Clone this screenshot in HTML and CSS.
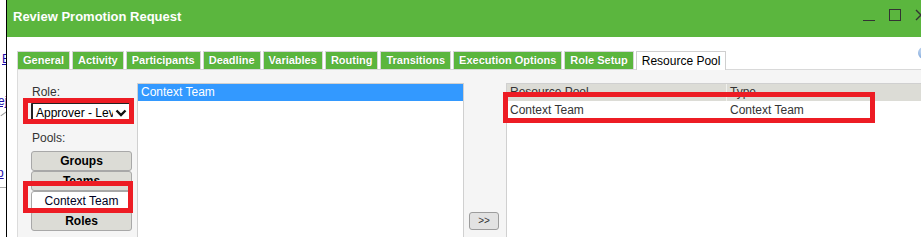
FILE: index.html
```html
<!DOCTYPE html>
<html>
<head>
<meta charset="utf-8">
<link rel="stylesheet" href="styles.css">
</head>
<body>
<div class="screen">
  <div class="behind">
    <a class="frag f1" href="#">E</a>
    <a class="frag f2" href="#">ej</a>
    <div class="slash"></div>
    <a class="frag f3" href="#">p</a>
    <div class="hr"></div>
  </div>
  <div class="dialog">
    <div class="titlebar">
      <span class="title">Review Promotion Request</span>
      <div class="controls">
        <span class="ctl-min"></span>
        <span class="ctl-max"></span>
        <svg class="ctl-close" width="12" height="12" viewBox="0 0 12 12"><path d="M1 1 L11 11 M11 1 L1 11" stroke="#333" stroke-width="1.4" fill="none"/></svg>
      </div>
    </div>
    <div class="dbody">
      <div class="tabrow">
        <div class="tabs">
          <span class="tab">General</span>
          <span class="tab">Activity</span>
          <span class="tab">Participants</span>
          <span class="tab">Deadline</span>
          <span class="tab">Variables</span>
          <span class="tab">Routing</span>
          <span class="tab">Transitions</span>
          <span class="tab">Execution Options</span>
          <span class="tab">Role Setup</span>
          <span class="tab active">Resource Pool</span>
        </div>
        <span class="help"></span>
      </div>
      <div class="panel">
        <div class="leftcol">
          <div class="lbl">Role:</div>
          <div class="select"><span class="seltext">Approver - Level 1</span>
            <svg class="chev" width="12" height="8" viewBox="0 0 12 8"><path d="M1.5 1.5 L6 6 L10.5 1.5" stroke="#111" stroke-width="2.4" fill="none"/></svg>
          </div>
          <div class="lbl pools">Pools:</div>
          <div class="btns">
            <div class="pbtn">Groups</div>
            <div class="pbtn">Teams</div>
            <div class="pbtn on">Context Team</div>
            <div class="pbtn">Roles</div>
          </div>
        </div>
        <div class="listbox">
          <div class="li sel">Context Team</div>
        </div>
        <div class="midcol">
          <div class="movebtn">&gt;&gt;</div>
        </div>
        <div class="grid">
          <div class="ghead">
            <div class="c1">Resource Pool</div>
            <div class="c2">Type</div>
          </div>
          <div class="grow">
            <div class="c1">Context Team</div>
            <div class="c2">Context Team</div>
          </div>
        </div>
      </div>
    </div>
  </div>
  <div class="mark m-role"></div>
  <div class="mark m-pool"></div>
  <div class="mark m-row"></div>
</div>
</body>
</html>
```
FILE: styles.css
```css
html, body {
  margin: 0;
  padding: 0;
  background: #fff;
}
.screen {
  position: relative;
  width: 921px;
  height: 237px;
  overflow: hidden;
  display: flex;
  font-family: "Liberation Sans", Arial, sans-serif;
}
.behind {
  width: 6px;
  flex: none;
  overflow: hidden;
  background: #fff;
  font-size: 12px;
}
.frag {
  display: block;
  color: #1a0dab;
  text-decoration: underline;
  line-height: 12px;
  white-space: nowrap;
}
.f1 { margin-top: 53px; text-indent: 2px; }
.f2 { margin-top: 30px; text-indent: -2px; }
.slash {
  width: 8px;
  height: 1px;
  background: #999;
  transform: rotate(-35deg);
  margin-top: 6px;
}
.f3 { margin-top: 53px; text-indent: -3px; }
.hr {
  height: 1px;
  background: #aaa;
  margin-top: 8px;
}
.dialog {
  flex: 1;
  border-left: 1px solid #000;
  display: flex;
  flex-direction: column;
  min-width: 0;
}
.titlebar {
  height: 37px;
  flex: none;
  background: #5bb63e;
  display: flex;
  align-items: center;
  overflow: hidden;
}
.title {
  color: #fff;
  font-weight: bold;
  font-size: 13px;
  padding-left: 6px;
  margin-top: -4px;
}
.controls {
  margin-left: auto;
  margin-right: -6px;
  display: flex;
  align-items: center;
  gap: 14px;
  margin-top: -7px;
}
.ctl-min {
  width: 12px;
  height: 1px;
  background: #333;
  margin-top: 10px;
}
.ctl-max {
  width: 10px;
  height: 10px;
  border: 1.5px solid #333;
}
.ctl-close { display: block; }
.dbody {
  flex: 1;
  background: #fff;
  padding: 14px 0 0 10px;
  display: flex;
  flex-direction: column;
}
.tabrow {
  display: flex;
  align-items: flex-end;
  position: relative;
  z-index: 1;
}
.tabs {
  display: flex;
  align-items: flex-end;
}
.tab {
  background: #5bb63e;
  color: #fff;
  font-weight: bold;
  font-size: 11px;
  line-height: 17px;
  height: 17px;
  padding: 0 5px;
  border: 1px solid #d6d6d6;
  border-bottom: none;
  margin-right: 2px;
  white-space: nowrap;
  text-shadow: 0 0 1px rgba(0,0,0,0.25);
}
.tab.active {
  background: #fff;
  color: #000;
  font-weight: normal;
  font-size: 12px;
  padding: 0 5px;
  height: 18px;
  line-height: 18px;
  border-color: #cfcfcf;
  margin-bottom: -1px;
  text-shadow: none;
}
.help {
  margin-left: auto;
  margin-right: -9px;
  align-self: flex-start;
  margin-top: -4px;
  width: 12px;
  height: 12px;
  border-radius: 50%;
  background: radial-gradient(circle at 40% 35%, #cfe0f5, #5d8fd0);
}
.panel {
  flex: 1;
  background: #f5f5f5;
  border-top: 1px solid #d9d9d9;
  border-left: 1px solid #dcdcdc;
  display: flex;
  align-items: flex-start;
  min-height: 0;
}
.leftcol {
  width: 105px;
  flex: none;
  padding: 15px 0 0 14px;
  color: #333;
  font-size: 12px;
}
.lbl {
  line-height: 14px;
}
.select {
  margin: 3px 0 0 -1px;
  width: 96px;
  height: 17px;
  border: 1px solid #222;
  border-top-width: 2px;
  border-left-width: 2px;
  border-radius: 2px;
  background: #fff;
  display: flex;
  align-items: center;
  overflow: hidden;
}
.seltext {
  flex: 1;
  overflow: hidden;
  white-space: nowrap;
  color: #000;
  font-size: 12px;
  padding-left: 3px;
}
.chev {
  flex: none;
  margin: 0 2px 0 2px;
}
.pools {
  margin-top: 9px;
}
.btns {
  margin: 6px 0 0 -1px;
  display: flex;
  flex-direction: column;
}
.pbtn {
  width: 99px;
  height: 18px;
  line-height: 18px;
  border: 1px solid #a8a8a8;
  border-radius: 3px;
  background: #dcdcd6;
  color: #000;
  text-align: center;
  font-size: 12px;
  font-weight: bold;
}
.pbtn.on {
  background: #fff;
  font-weight: normal;
  color: #000022;
}
.listbox {
  margin-top: 13px;
  width: 325px;
  height: 200px;
  flex: none;
  border: 1px solid #d0d0d0;
  background: #fff;
}
.li {
  height: 17px;
  line-height: 17px;
  font-size: 12px;
  padding-left: 3px;
}
.li.sel {
  background: #3399ff;
  color: #fff;
}
.midcol {
  width: 37px;
  flex: none;
  padding: 142px 0 0 5px;
}
.movebtn {
  width: 28px;
  height: 16px;
  line-height: 16px;
  border: 1px solid #9c9c9c;
  border-radius: 3px;
  background: #e2e2e2;
  color: #333;
  font-size: 10px;
  text-align: center;
}
.grid {
  margin-top: 13px;
  flex: 1;
  height: 200px;
  border: 1px solid #d0d0d0;
  border-right: none;
  background: #fff;
  font-size: 12px;
  color: #333;
}
.ghead, .grow {
  display: flex;
}
.ghead {
  background: #dcdcd6;
  height: 17px;
  line-height: 17px;
}
.grow {
  height: 19px;
  line-height: 19px;
}
.c1 {
  width: 216px;
  padding-left: 3px;
  flex: none;
}
.ghead .c1 {
  border-right: 1px solid #f0f0ec;
}
.grow .c1 {
  border-right: 1px solid transparent;
}
.c2 {
  padding-left: 3px;
}
.mark {
  position: absolute;
  border: 5px solid #ed1c24;
  box-sizing: border-box;
  pointer-events: none;
}
.m-role { left: 23px; top: 98px; width: 111px; height: 26px; }
.m-pool { left: 23px; top: 181px; width: 110px; height: 32px; }
.m-row  { left: 503px; top: 92px; width: 372px; height: 31px; }
```
